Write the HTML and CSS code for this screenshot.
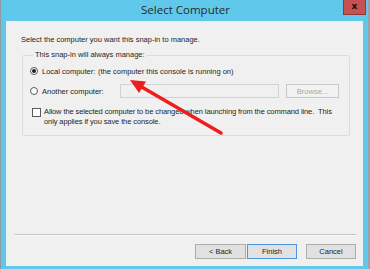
FILE: index.html
```html
<!DOCTYPE html>
<html lang="en">
<head>
    <meta charset="UTF-8">
    <title>Select Computer</title>
    <link rel="stylesheet" href="styles.css">
</head>
<body>
    <div class="window">
        <div class="titlebar">
            <span></span>
            <span class="title">Select Computer</span>
            <span class="close">x</span>
        </div>

        <div class="content">
            <p class="intro">Select the computer you want this snap-in to manage.</p>

            <fieldset class="group">
                <legend>This snap-in will always manage:</legend>

                <div class="row first">
                    <span class="radio checked"></span>
                    <span class="label-local">Local computer:</span>
                    <span>(the computer this console is running on)</span>
                </div>

                <div class="row second">
                    <span class="radio"></span>
                    <span class="label-other">Another computer:</span>
                    <span class="textbox"></span>
                    <span class="btn disabled browse">Browse...</span>
                </div>

                <div class="check-row">
                    <span class="checkbox"></span>
                    <span class="check-text">Allow the selected computer to be changed when launching from the command line.&nbsp; This<br>only applies if you save the console.</span>
                </div>
            </fieldset>

            <div class="footer">
                <div class="separator"></div>
                <div class="buttons">
                    <span class="btn back">&lt; Back</span>
                    <span class="btn default">Finish</span>
                    <span class="btn cancel">Cancel</span>
                </div>
            </div>
        </div>

        <!-- red arrow drawn over the dialog -->
        <svg class="arrow" width="370" height="269" viewBox="0 0 370 269">
            <line x1="221" y1="133" x2="140" y2="86" stroke="#ef1d1d" stroke-width="3.5" stroke-linecap="round"/>
            <polygon points="130,80 146,81.5 139,93" fill="#ef1d1d"/>
        </svg>
    </div>
</body>
</html>
```

FILE: styles.css
```css
* {
    margin: 0;
    padding: 0;
    box-sizing: border-box;
}

body {
    font-family: 'Liberation Sans', Arial, sans-serif;
    font-size: 7.5px;
    color: #1e1e1e;
    background: #fff;
}

.window {
    position: relative;
    width: 370px;
    height: 269px;
    background: #60c8ea;
    border-left: 1px solid #8f9aa0;
    border-right: 2px solid #9aa3a8;
    display: flex;
    flex-direction: column;
}

.titlebar {
    height: 21px;
    display: grid;
    grid-template-columns: 1fr auto 1fr;
    align-items: start;
}

.title {
    font-family: 'Open Sans', 'Noto Sans', sans-serif;
    font-size: 11.5px;
    line-height: 20px;
    color: #2a2a2a;
    margin-left: 2px;
}

.close {
    justify-self: end;
    margin-right: 2px;
    width: 23px;
    height: 15px;
    background: #c75050;
    border: 1px solid #8a3a3a;
    border-top: none;
    color: #111;
    font-family: 'DejaVu Sans', sans-serif;
    font-weight: bold;
    font-size: 9px;
    line-height: 13px;
    text-align: center;
}

.content {
    flex: 1;
    margin: 0 5px 3px 5px;
    background: #f0f0f0;
    display: flex;
    flex-direction: column;
}

.intro {
    line-height: 10px;
    margin: 14px 0 0 15px;
}

.group {
    margin: 5px 13px 0 16px;
    border: 1px solid #dcdcdc;
    border-radius: 2px;
    padding: 0 0 8px 7px;
}

.group legend {
    line-height: 10px;
    margin-left: 3px;
    padding: 0 2px;
}

.row {
    display: flex;
    align-items: center;
    height: 14px;
    white-space: nowrap;
}

.row.first {
    margin-top: 4px;
}

.row.second {
    margin-top: 6px;
}

.radio {
    flex: none;
    width: 8px;
    height: 8px;
    border: 1px solid #5a5a5a;
    border-radius: 50%;
    background: #fff;
    margin-right: 4px;
    display: flex;
    align-items: center;
    justify-content: center;
}

.radio.checked::after {
    content: "";
    width: 4px;
    height: 4px;
    border-radius: 50%;
    background: #1e1e1e;
}

.label-local {
    flex: none;
    width: 56px;
}

.label-other {
    flex: none;
    width: 78px;
}

.textbox {
    flex: none;
    width: 159px;
    height: 14px;
    border: 1px solid #d2d2d2;
    background: #f0f0f0;
}

.btn {
    display: flex;
    align-items: center;
    justify-content: center;
    width: 50px;
    height: 15px;
    border: 1px solid #adadad;
    background: #e1e1e1;
}

.btn.disabled {
    color: #a6a6a6;
    border-color: #c8c8c8;
    background: #f2f2f2;
}

.browse {
    flex: none;
    width: 53px;
    height: 14px;
    margin-left: 7px;
}

.check-row {
    display: flex;
    align-items: flex-start;
    margin-top: 9px;
    padding-left: 2px;
}

.checkbox {
    flex: none;
    width: 9px;
    height: 9px;
    border: 1px solid #5a5a5a;
    background: #fff;
    margin-top: 1px;
    margin-right: 3px;
}

.check-text {
    line-height: 10px;
    white-space: nowrap;
    letter-spacing: -0.1px;
}

.footer {
    margin-top: auto;
    padding: 0 7px 7px 8px;
}

.separator {
    height: 2px;
    border-top: 1px solid #c4c4c4;
    border-bottom: 1px solid #fafafa;
}

.buttons {
    display: flex;
    justify-content: flex-end;
    margin-top: 8px;
}

.back {
    width: 51px;
}

.default {
    margin-left: 1px;
    border-color: #4d97e0;
}

.cancel {
    margin-left: 9px;
}

.arrow {
    position: absolute;
    left: -1px;
    top: 0;
    pointer-events: none;
}
```
